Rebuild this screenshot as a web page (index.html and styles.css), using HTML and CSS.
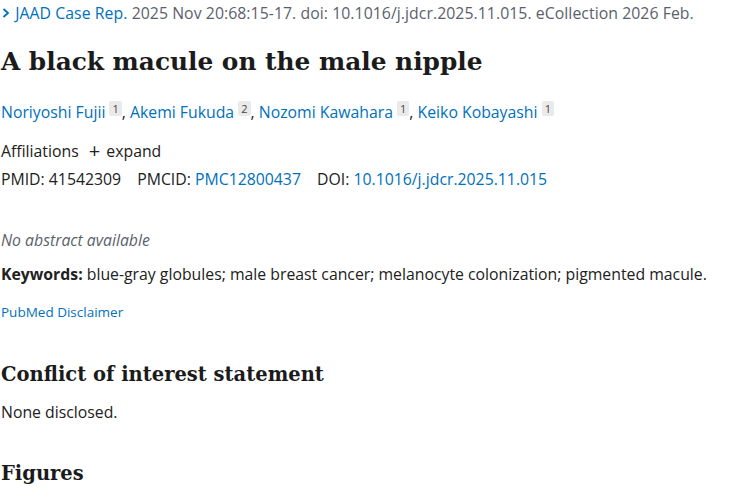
FILE: index.html
```html
<!DOCTYPE html>
<html>
<head>
<meta charset="utf-8">
<link rel="stylesheet" href="styles.css">
</head>
<body>
<main class="article">
  <div class="cit">
    <span class="chev"><svg width="10" height="12" viewBox="0 0 10 12"><path d="M2.5 2 L7 6 L2.5 10" fill="none" stroke="#0071bc" stroke-width="1.8"/></svg></span>
    <a class="journal">JAAD Case Rep.</a> 2025 Nov 20:68:15-17. doi: 10.1016/j.jdcr.2025.11.015. eCollection 2026 Feb.
  </div>
  <h1 class="title">A black macule on the male nipple</h1>
  <div class="authors">
    <a>Noriyoshi Fujii</a> <sup class="aff">1</sup>, <a>Akemi Fukuda</a> <sup class="aff">2</sup>, <a>Nozomi Kawahara</a> <sup class="aff">1</sup>, <a>Keiko Kobayashi</a> <sup class="aff">1</sup>
  </div>
  <div class="affs">Affiliations <span class="plus">+</span> expand</div>
  <div class="ids">PMID: 41542309 <span class="gap"></span>PMCID: <a>PMC12800437</a> <span class="gap"></span>DOI: <a>10.1016/j.jdcr.2025.11.015</a></div>
  <p class="noabs">No abstract available</p>
  <p class="kw"><strong>Keywords:</strong> blue-gray globules; male breast cancer; melanocyte colonization; pigmented macule.</p>
  <a class="disc">PubMed Disclaimer</a>
  <h2 class="sec">Conflict of interest statement</h2>
  <p class="body">None disclosed.</p>
  <h2 class="sec fig">Figures</h2>
</main>
</body>
</html>
```
FILE: styles.css
```css
html, body { margin: 0; padding: 0; background: #fff; }
body { font-family: "Open Sans", "Noto Sans", sans-serif; color: #212121; font-size: 15.8px; }
a { color: #0071bc; text-decoration: none; }
.article { padding: 0 0 0 1px; }
.cit { color: #5b616b; line-height: 24px; margin-top: 1px; white-space: nowrap; letter-spacing: 0.06px; }
.chev { display: inline-block; width: 10px; }
.journal { color: #0071bc; }
.title { font-family: "DejaVu Serif", serif; font-weight: bold; font-size: 24.8px; line-height: 36px; margin: 19px 0 0; color: #1b1b1b; }
.authors { margin-top: 17px; line-height: 24px; }
.aff { background: #eaeaea; color: #444; font-size: 11px; padding: 0 3px; vertical-align: 5px; border-radius: 2px; }
.affs { margin-top: 15px; line-height: 24px; }
.plus { font-size: 20px; margin: 0 2px 0 6px; vertical-align: -1px; }
.ids { line-height: 24px; margin-top: 4px; }
.gap { display: inline-block; width: 12px; }
.noabs { font-style: italic; color: #5b616b; margin: 37px 0 0; line-height: 24px; }
.kw { margin: 10px 0 0; line-height: 24px; }
.disc { display: block; font-size: 13.5px; margin-top: 16px; line-height: 20px; }
.sec { font-family: "DejaVu Serif", serif; font-weight: bold; font-size: 19.5px; line-height: 30px; margin: 38px 0 0; color: #1b1b1b; }
.body { margin: 10px 0 0; line-height: 24px; }
.fig { margin-top: 35px; }
```
